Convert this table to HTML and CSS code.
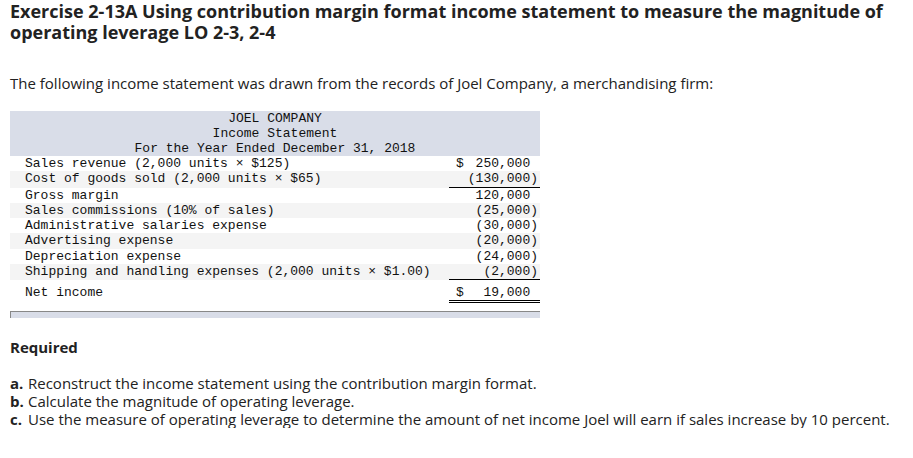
FILE: index.html
```html
<!DOCTYPE html>
<html>
<head>
<meta charset="utf-8">
<link rel="stylesheet" href="styles.css">
</head>
<body>
<h1 class="title">Exercise 2-13A Using contribution margin format income statement to measure the magnitude of operating leverage LO 2-3, 2-4</h1>
<p class="intro">The following income statement was drawn from the records of Joel Company, a merchandising firm:</p>
<div class="statement">
  <div class="head">
    <div>JOEL COMPANY</div>
    <div>Income Statement</div>
    <div>For the Year Ended December 31, 2018</div>
  </div>
  <div class="row">
    <span class="lbl">Sales revenue (2,000 units × $125)</span>
    <span class="amt"><span>$</span><span>250,000&nbsp;</span></span>
  </div>
  <div class="row alt">
    <span class="lbl">Cost of goods sold (2,000 units × $65)</span>
    <span class="amt under"><span></span><span>(130,000)</span></span>
  </div>
  <div class="row">
    <span class="lbl">Gross margin</span>
    <span class="amt"><span></span><span>120,000&nbsp;</span></span>
  </div>
  <div class="row alt">
    <span class="lbl">Sales commissions (10% of sales)</span>
    <span class="amt"><span></span><span>(25,000)</span></span>
  </div>
  <div class="row">
    <span class="lbl">Administrative salaries expense</span>
    <span class="amt"><span></span><span>(30,000)</span></span>
  </div>
  <div class="row alt">
    <span class="lbl">Advertising expense</span>
    <span class="amt"><span></span><span>(20,000)</span></span>
  </div>
  <div class="row">
    <span class="lbl">Depreciation expense</span>
    <span class="amt"><span></span><span>(24,000)</span></span>
  </div>
  <div class="row alt">
    <span class="lbl">Shipping and handling expenses (2,000 units × $1.00)</span>
    <span class="amt under"><span></span><span>(2,000)</span></span>
  </div>
  <div class="row total">
    <span class="lbl">Net income</span>
    <span class="amt dbl"><span>$</span><span>19,000&nbsp;</span></span>
  </div>
  <div class="foot"></div>
</div>
<h2 class="req">Required</h2>
<ol class="tasks">
  <li><b>a.</b><span>Reconstruct the income statement using the contribution margin format.</span></li>
  <li><b>b.</b><span>Calculate the magnitude of operating leverage.</span></li>
  <li><b>c.</b><span>Use the measure of operating leverage to determine the amount of net income Joel will earn if sales increase by 10 percent.</span></li>
</ol>
</body>
</html>
```

FILE: styles.css
```css
html, body {
  margin: 0;
  padding: 0;
  background: #fff;
}
body {
  padding: 1px 10px 0 10px;
  font-family: "Open Sans", Lato, sans-serif;
  color: #222;
}
.title {
  margin: 0;
  font-size: 18px;
  line-height: 21px;
  font-weight: 700;
  color: #222;
}
.intro {
  margin: 31px 0 0 0;
  font-size: 15px;
  line-height: 18px;
}
.statement {
  margin-top: 19px;
  width: 530px;
  font-family: "Liberation Mono", "Courier New", monospace;
  font-size: 13px;
  color: #111;
}
.head {
  background: #d9dde8;
  text-align: center;
  line-height: 15px;
}
.row {
  display: flex;
  line-height: 15.25px;
  background: #fff;
}
.row.alt {
  background: #f4f4f4;
}
.lbl {
  flex: 1;
  padding-left: 15px;
  white-space: pre;
}
.amt {
  width: 91px;
  display: flex;
  justify-content: space-between;
  padding: 0 2px 0 7px;
  box-sizing: border-box;
}
.amt.under {
  border-bottom: 1px solid #000;
}
.row.total {
  padding-top: 5px;
  line-height: 15px;
}
.amt.dbl {
  border-bottom: 3px double #000;
}
.foot {
  margin-top: 8px;
  height: 6px;
  background: #d9dde8;
  border-top: 1px solid #888;
  border-left: 1px solid #888;
}
.req {
  margin: 20px 0 0 0;
  font-size: 15px;
  line-height: 18px;
  font-weight: 700;
}
.tasks {
  list-style: none;
  margin: 18px 0 0 0;
  padding: 0;
  font-size: 15px;
  line-height: 18px;
}
.tasks li {
  display: flex;
}
.tasks b {
  width: 18px;
  flex: none;
}
```
